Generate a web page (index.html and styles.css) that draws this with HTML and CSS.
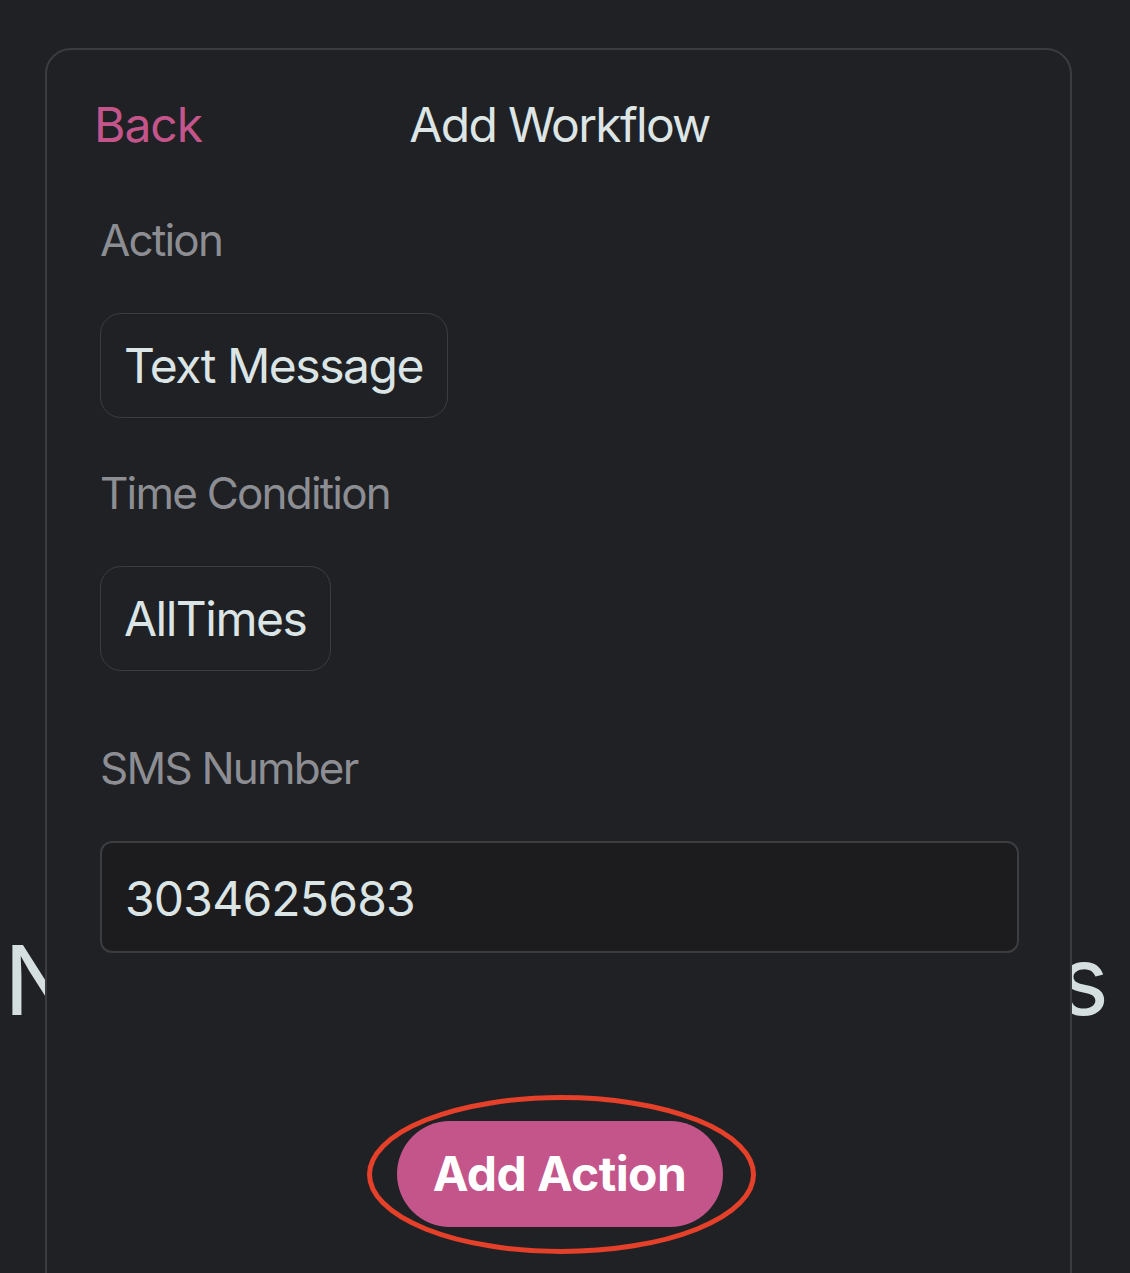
FILE: index.html
```html
<!DOCTYPE html>
<html lang="en">
<head>
<meta charset="utf-8">
<title>Add Workflow</title>
<link rel="stylesheet" href="styles.css">
</head>
<body>
  <main class="page">
    <h1 class="page-title">No Workflows</h1>
  </main>

  <section class="sheet">
    <header class="sheet-header">
      <a class="back-link" href="#">Back</a>
      <h2 class="sheet-title">Add Workflow</h2>
      <span class="spacer"></span>
    </header>

    <div class="form">
      <div class="field">
        <label class="field-label">Action</label>
        <div class="chip">Text Message</div>
      </div>

      <div class="field">
        <label class="field-label">Time Condition</label>
        <div class="chip">AllTimes</div>
      </div>

      <div class="field field-sms">
        <label class="field-label">SMS Number</label>
        <div class="text-input">3034625683</div>
      </div>

      <div class="actions">
        <div class="highlight-wrap">
          <button class="primary-btn" type="button">Add Action</button>
          <svg class="highlight" width="393" height="163" viewBox="0 0 393 163" aria-hidden="true">
            <ellipse cx="196.5" cy="81.5" rx="192" ry="77" fill="none" stroke="#e5402a" stroke-width="5"/>
          </svg>
        </div>
      </div>
    </div>
  </section>
</body>
</html>
```

FILE: styles.css
```css
* {
  box-sizing: border-box;
}

html, body {
  margin: 0;
  padding: 0;
  height: 100%;
}

body {
  background: #202125;
  font-family: Inter, "Noto Sans", "Liberation Sans", sans-serif;
  color: #dce4e4;
  overflow: hidden;
  position: relative;
}

.page {
  padding: 922px 21px 0 4px;
}

.page-title {
  margin: 0;
  font-size: 96px;
  font-weight: 400;
  line-height: 116px;
  color: #d6dfdf;
  text-align: justify;
  text-align-last: justify;
}

.sheet {
  position: absolute;
  left: 45px;
  top: 48px;
  width: 1027px;
  height: 1300px;
  background: #202125;
  border: 2px solid #3b3c40;
  border-radius: 26px;
  padding: 45px 51px 0 53px;
}

.sheet-header {
  display: grid;
  grid-template-columns: 1fr auto 1fr;
  align-items: baseline;
  margin-left: -6px;
  margin-right: -6px;
  height: 60px;
}

.back-link {
  font-size: 48px;
  line-height: 60px;
  color: #c4558b;
  text-decoration: none;
  letter-spacing: -1px;
}

.sheet-title {
  margin: 0;
  font-size: 48px;
  line-height: 60px;
  font-weight: 400;
  color: #dde5e5;
  letter-spacing: -1.7px;
}

.form {
  display: flex;
  flex-direction: column;
  padding-top: 59px;
}

.field {
  display: flex;
  flex-direction: column;
  align-items: flex-start;
  gap: 47px;
  margin-bottom: 49px;
}

.field-sms {
  margin-top: 22px;
  align-items: stretch;
}

.field-label {
  font-size: 44px;
  line-height: 52px;
  color: #8d8e93;
  padding-left: 0;
  letter-spacing: -1.8px;
}

.chip {
  border: 1px solid #3c3d41;
  border-radius: 21px;
  padding: 22px 24px 22px 23px;
  font-size: 48px;
  line-height: 59px;
  color: #dce5e5;
  letter-spacing: -1.5px;
}

.text-input {
  background: #1c1c1e;
  border: 2px solid #3c3d40;
  border-radius: 12px;
  padding: 27px 24px 23px 23px;
  font-size: 48px;
  line-height: 58px;
  color: #dce5e5;
  letter-spacing: -0.8px;
}

.actions {
  display: flex;
  justify-content: center;
  margin-top: 119px;
}

.highlight-wrap {
  position: relative;
}

.primary-btn {
  display: block;
  width: 326px;
  height: 106px;
  border: 0;
  border-radius: 53px;
  background: #c4558b;
  color: #ffffff;
  font-family: Inter, "Noto Sans", "Liberation Sans", sans-serif;
  font-size: 48px;
  font-weight: 700;
  line-height: 106px;
  padding: 0;
  letter-spacing: -0.6px;
}

.highlight {
  position: absolute;
  left: -32px;
  top: -28px;
  pointer-events: none;
}
```
